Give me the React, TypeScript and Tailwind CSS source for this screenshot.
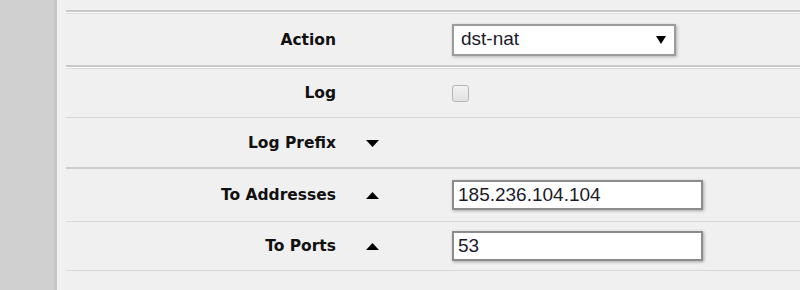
import React from "react";

const labelFont = { fontFamily: '"DejaVu Sans", Verdana, sans-serif' };

function Caret({ up }: { up?: boolean }) {
  return (
    <svg width="13" height="7" viewBox="0 0 13 7" className="block">
      {up ? <polygon points="0,7 13,7 6.5,0" fill="#000" /> : <polygon points="0,0 13,0 6.5,7" fill="#000" />}
    </svg>
  );
}

function DoubleLine() {
  return (
    <div className="flex flex-col">
      <div className="h-[2px] bg-[#c9c9c9]" />
      <div className="h-[1px] bg-[#fafafa]" />
      <div className="h-[1px] bg-[#dedede]" />
    </div>
  );
}

function Row({
  label,
  caret,
  h,
  children,
}: {
  label: string;
  caret?: "up" | "down";
  h: string;
  children?: React.ReactNode;
}) {
  return (
    <div className={`flex items-center ${h}`}>
      <div className="w-[270px] pt-[2px] text-right text-[15.5px] font-bold text-[#111]" style={labelFont}>
        {label}
      </div>
      <div className="w-[116px] pl-[30px] pt-[1px]">
        {caret && <Caret up={caret === "up"} />}
      </div>
      <div className="flex items-center">{children}</div>
    </div>
  );
}

export default function App() {
  return (
    <div className="flex h-[290px] w-[800px] overflow-hidden bg-[#f0f0f0]">
      <div className="w-[57px] shrink-0 border-r-[3px] border-[#c6c6c6] bg-[#d0d0d0]" />
      <div className="flex-1 pl-[9px]">
        <div className="h-[10px]" />
        <DoubleLine />
        <Row label="Action" h="h-[51px]">
          <div
            className="flex h-[32px] w-[224px] items-center justify-between border-2 border-[#9c9c9c] bg-white pl-[7px] pr-[8px] text-[19px] text-[#1a1a2a] shadow-[1px_1px_3px_rgba(0,0,0,0.25)]"
            style={{ fontFamily: '"Liberation Sans", Arial, sans-serif' }}
          >
            <span>dst-nat</span>
            <svg width="10" height="8" viewBox="0 0 10 8">
              <polygon points="0,0 10,0 5,8" fill="#000" />
            </svg>
          </div>
        </Row>
        <DoubleLine />
        <Row label="Log" h="h-[48px]">
          <div className="h-[17px] w-[17px] rounded-[3px] border border-[#b5b5b5] bg-gradient-to-b from-[#f2f2f2] to-[#e2e2e2]" />
        </Row>
        <div className="h-[1px] bg-[#d6d6d6]" />
        <Row label="Log Prefix" caret="down" h="h-[49px]" />
        <div className="h-[2px] bg-[#cfcfcf]" />
        <Row label="To Addresses" caret="up" h="h-[52px]">
          <input
            readOnly
            value="185.236.104.104"
            className="h-[30px] w-[251px] border-2 border-[#8c8c8c] bg-white px-[4px] text-[19px] text-[#1a1a2a] shadow-[1px_1px_3px_rgba(0,0,0,0.3)] outline-none"
            style={{ fontFamily: '"Liberation Sans", Arial, sans-serif' }}
          />
        </Row>
        <div className="h-[1px] bg-[#d9d9d9]" />
        <Row label="To Ports" caret="up" h="h-[48px]">
          <input
            readOnly
            value="53"
            className="h-[30px] w-[251px] border-2 border-[#8c8c8c] bg-white px-[4px] text-[19px] text-[#1a1a2a] shadow-[1px_1px_3px_rgba(0,0,0,0.3)] outline-none"
            style={{ fontFamily: '"Liberation Sans", Arial, sans-serif' }}
          />
        </Row>
        <div className="h-[1px] bg-[#d9d9d9]" />
      </div>
    </div>
  );
}
